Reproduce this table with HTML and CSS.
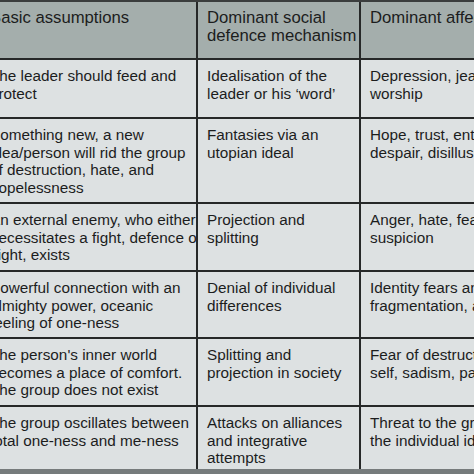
FILE: index.html
```html
<!DOCTYPE html>
<html lang="en">
<head>
<meta charset="utf-8">
<title>Basic assumptions table</title>
<link rel="stylesheet" href="styles.css">
</head>
<body>
<div class="table">
  <div class="cell head">Basic assumptions</div>
  <div class="cell head">Dominant social<br>defence mechanism</div>
  <div class="cell head last">Dominant affect</div>

  <div class="cell">The leader should feed and<br>protect</div>
  <div class="cell">Idealisation of the<br>leader or his ‘word’</div>
  <div class="cell last">Depression, jealousy,<br>worship</div>

  <div class="cell">Something new, a new<br>idea/person will rid the group<br>of destruction, hate, and<br>hopelessness</div>
  <div class="cell">Fantasies via an<br>utopian ideal</div>
  <div class="cell last">Hope, trust, enthusiasm,<br>despair, disillusionment</div>

  <div class="cell">An external enemy, who either<br>necessitates a fight, defence or<br>flight, exists</div>
  <div class="cell">Projection and<br>splitting</div>
  <div class="cell last">Anger, hate, fear,<br>suspicion</div>

  <div class="cell">Powerful connection with an<br>almighty power, oceanic<br>feeling of one-ness</div>
  <div class="cell">Denial of individual<br>differences</div>
  <div class="cell last">Identity fears and<br>fragmentation, anxiety</div>

  <div class="cell">The person's inner world<br>becomes a place of comfort.<br>The group does not exist</div>
  <div class="cell">Splitting and<br>projection in society</div>
  <div class="cell last">Fear of destruction of<br>self, sadism, paranoia</div>

  <div class="cell end">The group oscillates between<br>total one-ness and me-ness</div>
  <div class="cell end">Attacks on alliances<br>and integrative<br>attempts</div>
  <div class="cell end last">Threat to the group and<br>the individual identity</div>
</div>
</body>
</html>
```
FILE: styles.css
```css
html, body {
  margin: 0;
  padding: 0;
  width: 474px;
  height: 474px;
  overflow: hidden;
  background: #dde1e2;
}

.table {
  display: grid;
  grid-template-columns: 217px 163px 220px;
  grid-template-rows: 58px 59px 85px 68px 67px 68px 62px;
  margin-left: -19px;
  border-top: 2px solid #3a3d3d;
  border-bottom: 5px solid #767b7c;
  width: max-content;
  font-family: "Liberation Sans", Arial, sans-serif;
  font-size: 15.3px;
  line-height: 17.5px;
  color: #1c1d1d;
}

.cell {
  box-sizing: border-box;
  background: #dde1e2;
  border-right: 2px solid #262828;
  border-bottom: 2px solid #262828;
  padding: 7px 0 0 9px;
  white-space: nowrap;
  overflow: hidden;
}

.cell.last {
  border-right: 0;
}

.cell.end {
  border-bottom: 0;
}

.cell.head {
  background: #a4aeac;
  font-size: 16.7px;
  line-height: 17.5px;
  padding-top: 7px;
}
```
